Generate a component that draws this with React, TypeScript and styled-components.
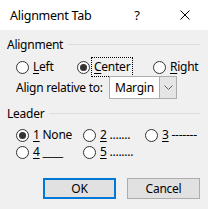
import styled, { createGlobalStyle } from "styled-components";

const GlobalStyle = createGlobalStyle`
  html, body {
    margin: 0;
    padding: 0;
  }
  body {
    width: 208px;
    height: 209px;
    overflow: hidden;
    background: #ffffff;
    font-family: "Noto Sans", "Open Sans", sans-serif;
    font-size: 12px;
    letter-spacing: -0.25px;
    color: #000000;
  }
`;

const Dialog = styled.div`
  width: 208px;
  height: 209px;
  display: flex;
  flex-direction: column;
`;

const TitleBar = styled.div`
  height: 30px;
  flex: none;
  display: flex;
  align-items: center;
  background: #ffffff;
  padding-left: 10px;
`;

const Title = styled.div`
  flex: 1;
  font-size: 12.5px;
`;

const TitleButton = styled.div<{ w: number }>`
  width: ${(p) => p.w}px;
  height: 30px;
  display: flex;
  align-items: center;
  justify-content: center;
  font-size: 13px;
`;

const Body = styled.div`
  flex: 1;
  background: #f0f0f0;
  padding: 6px 8px 0 7px;
  display: flex;
  flex-direction: column;
`;

const GroupHeader = styled.div<{ top: number }>`
  height: 16px;
  margin-top: ${(p) => p.top}px;
  display: flex;
  align-items: center;
  gap: 5px;
  &::after {
    content: "";
    flex: 1;
    height: 1px;
    background: #dcdcdc;
  }
`;

const OptionRow = styled.div<{ top: number }>`
  margin-top: ${(p) => p.top}px;
  padding-left: 9px;
  display: flex;
  height: 16px;
`;

const OptionGrid = styled.div<{ top: number }>`
  margin-top: ${(p) => p.top}px;
  padding-left: 9px;
  display: grid;
  grid-template-columns: 67px 62px auto;
  grid-auto-rows: 16px;
  row-gap: 1px;
`;

const Radio = styled.label<{ w?: number }>`
  display: flex;
  align-items: center;
  gap: 3px;
  width: ${(p) => (p.w ? `${p.w}px` : "auto")};
  white-space: nowrap;
`;

const Circle = styled.span<{ checked?: boolean }>`
  width: 11px;
  height: 11px;
  border: 1px solid #333333;
  border-radius: 50%;
  background: #ffffff;
  display: flex;
  align-items: center;
  justify-content: center;
  flex: none;
  &::after {
    content: "";
    width: 7px;
    height: 7px;
    border-radius: 50%;
    background: ${(p) => (p.checked ? "#333333" : "transparent")};
  }
`;

const Caption = styled.span<{ focused?: boolean }>`
  padding: 0 1px;
  line-height: 16px;
  outline: ${(p) => (p.focused ? "1px dotted #000000" : "none")};
  outline-offset: 1px;
`;

const Key = styled.span`
  text-decoration: underline;
  text-underline-offset: 2px;
`;

const RelativeRow = styled.div`
  margin-top: 1px;
  padding-left: 9px;
  display: flex;
  align-items: center;
  height: 22px;
`;

const RelativeLabel = styled.span`
  width: 93px;
`;

const Combo = styled.div`
  width: 66px;
  height: 21px;
  border: 1px solid #adadad;
  background: #ffffff;
  display: flex;
`;

const ComboValue = styled.div`
  flex: 1;
  padding-left: 5px;
  line-height: 21px;
`;

const ComboButton = styled.div`
  width: 16px;
  background: #e5e5e5;
  border-left: 1px solid #adadad;
  display: flex;
  align-items: center;
  justify-content: center;
`;

const Buttons = styled.div`
  margin-top: 18px;
  padding-left: 36px;
  display: flex;
  gap: 11px;
`;

const Button = styled.div<{ primary?: boolean }>`
  box-sizing: border-box;
  width: 73px;
  height: 21px;
  background: #e1e1e1;
  border: ${(p) => (p.primary ? "2px solid #0078d7" : "1px solid #adadad")};
  display: flex;
  align-items: center;
  justify-content: center;
`;

export default function App() {
  return (
    <>
      <GlobalStyle />
      <Dialog>
        <TitleBar>
          <Title>Alignment Tab</Title>
          <TitleButton w={50}>?</TitleButton>
          <TitleButton w={46}>
            <svg width="10" height="10" viewBox="0 0 10 10">
              <path d="M0.5 0.5 L9.5 9.5 M9.5 0.5 L0.5 9.5" stroke="#000" strokeWidth="1" />
            </svg>
          </TitleButton>
        </TitleBar>
        <Body>
          <GroupHeader top={0}>Alignment</GroupHeader>
          <OptionRow top={7}>
            <Radio w={61}>
              <Circle />
              <Caption>
                <Key>L</Key>eft
              </Caption>
            </Radio>
            <Radio w={76}>
              <Circle checked />
              <Caption focused>
                <Key>C</Key>enter
              </Caption>
            </Radio>
            <Radio>
              <Circle />
              <Caption>
                <Key>R</Key>ight
              </Caption>
            </Radio>
          </OptionRow>
          <RelativeRow>
            <RelativeLabel>Align relative to:</RelativeLabel>
            <Combo>
              <ComboValue>Margin</ComboValue>
              <ComboButton>
                <svg width="9" height="5" viewBox="0 0 9 5">
                  <path d="M0.5 0.5 L4.5 4.5 L8.5 0.5" stroke="#606060" fill="none" strokeWidth="1" />
                </svg>
              </ComboButton>
            </Combo>
          </RelativeRow>
          <GroupHeader top={7}>Leader</GroupHeader>
          <OptionGrid top={6}>
            <Radio>
              <Circle checked />
              <Caption>
                <Key>1</Key> None
              </Caption>
            </Radio>
            <Radio>
              <Circle />
              <Caption>
                <Key>2</Key> .......
              </Caption>
            </Radio>
            <Radio>
              <Circle />
              <Caption>
                <Key>3</Key> -------
              </Caption>
            </Radio>
            <Radio>
              <Circle />
              <Caption>
                <Key>4</Key> ____
              </Caption>
            </Radio>
            <Radio>
              <Circle />
              <Caption>
                <Key>5</Key> ........
              </Caption>
            </Radio>
          </OptionGrid>
          <Buttons>
            <Button primary>OK</Button>
            <Button>Cancel</Button>
          </Buttons>
        </Body>
      </Dialog>
    </>
  );
}
